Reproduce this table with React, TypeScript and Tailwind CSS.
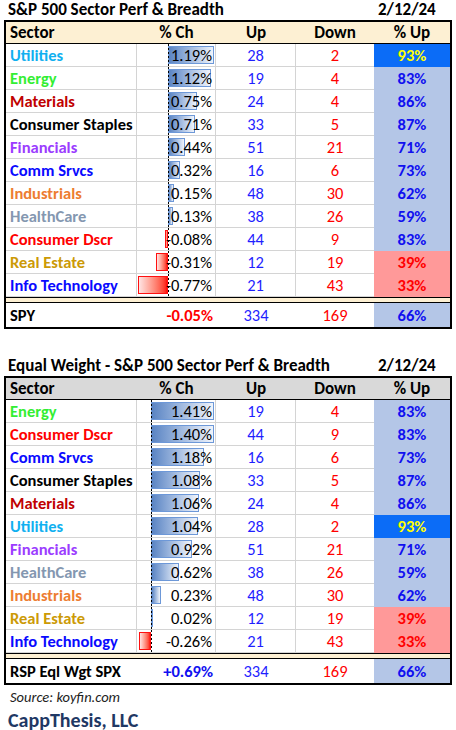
type Row = [string, string, number, number, number, number];

const SP500: Row[] = [
  ["Utilities", "#10b0f0", 1.19, 28, 2, 93],
  ["Energy", "#33ee33", 1.12, 19, 4, 83],
  ["Materials", "#c00000", 0.75, 24, 4, 86],
  ["Consumer Staples", "#000000", 0.71, 33, 5, 87],
  ["Financials", "#9b3cff", 0.44, 51, 21, 71],
  ["Comm Srvcs", "#0a0aff", 0.32, 16, 6, 73],
  ["Industrials", "#ed7d31", 0.15, 48, 30, 62],
  ["HealthCare", "#8497b0", 0.13, 38, 26, 59],
  ["Consumer Dscr", "#ff0000", -0.08, 44, 9, 83],
  ["Real Estate", "#cc9a06", -0.31, 12, 19, 39],
  ["Info Technology", "#0a0aff", -0.77, 21, 43, 33],
];

const EQUAL: Row[] = [
  ["Energy", "#33ee33", 1.41, 19, 4, 83],
  ["Consumer Dscr", "#ff0000", 1.4, 44, 9, 83],
  ["Comm Srvcs", "#0a0aff", 1.18, 16, 6, 73],
  ["Consumer Staples", "#000000", 1.08, 33, 5, 87],
  ["Materials", "#c00000", 1.06, 24, 4, 86],
  ["Utilities", "#10b0f0", 1.04, 28, 2, 93],
  ["Financials", "#9b3cff", 0.92, 51, 21, 71],
  ["HealthCare", "#8497b0", 0.62, 38, 26, 59],
  ["Industrials", "#ed7d31", 0.23, 48, 30, 62],
  ["Real Estate", "#cc9a06", 0.02, 12, 19, 39],
  ["Info Technology", "#0a0aff", -0.26, 21, 43, 33],
];

function PctUp({ v }: { v: number }) {
  // best sector gets the bright fill, weak breadth gets pink
  if (v >= 90)
    return <div className="h-full flex items-center justify-center bg-[#0b6cf7] text-[#ffff00] font-bold">{v}%</div>;
  if (v < 50)
    return <div className="h-full flex items-center justify-center bg-[#ff9999] text-[#ff0000] font-bold">{v}%</div>;
  return <div className="h-full flex items-center justify-center bg-[#b4c6e7] text-[#1010f0] font-bold">{v}%</div>;
}

function BarCell({ v, axis, scale }: { v: number; axis: number; scale: number }) {
  const w = Math.abs(v) * scale;
  return (
    <div className="relative h-full border-r border-b border-[#d4d4d4] flex items-center justify-end pr-[3px]">
      {v >= 0 ? (
        <div
          className="absolute top-[2px] h-[18px] border border-[#6d98d8] bg-gradient-to-r from-[#5a84c3] to-[#f0f4fb]"
          style={{ left: axis, width: w }}
        />
      ) : (
        <div
          className="absolute top-[2px] h-[18px] border border-[#ff1010] bg-gradient-to-r from-[#ffe4e4] to-[#ff0000]"
          style={{ left: axis - w, width: w }}
        />
      )}
      <div
        className="absolute top-0 bottom-0 w-px bg-[repeating-linear-gradient(to_bottom,#000_0_2px,transparent_2px_4px)]"
        style={{ left: axis }}
      />
      <span className="relative">{v.toFixed(2)}%</span>
    </div>
  );
}

function SectorTable({
  title,
  rows,
  headBg,
  axis,
  scale,
  footLabel,
  footValue,
  footColor,
}: {
  title: string;
  rows: Row[];
  headBg: string;
  axis: number;
  scale: number;
  footLabel: string;
  footValue: string;
  footColor: string;
}) {
  const cols = "grid grid-cols-[131px_79px_80px_78px_76px]";
  return (
    <div className="px-[4px]">
      <div className="h-[20px] flex items-end pb-[2px] text-[17px] font-bold leading-none">
        <span className="pl-[4px] w-[374px]">{title}</span>
        <span>2/12/24</span>
      </div>
      <div className="border-2 border-black w-[448px]">
        <div className={`${cols} h-[22px] items-center text-[17px] font-bold border-b border-black ${headBg}`}>
          <span className="pl-[4px]">Sector</span>
          <span className="text-center">% Ch</span>
          <span className="text-center">Up</span>
          <span className="text-center">Down</span>
          <span className="text-center">% Up</span>
        </div>
        {rows.map(([name, color, ch, up, down, pct]) => (
          <div key={name} className={`${cols} h-[23px]`}>
            <div className="h-full flex items-center pl-[4px] font-bold border-r border-b border-[#d4d4d4]" style={{ color }}>
              {name}
            </div>
            <BarCell v={ch} axis={axis} scale={scale} />
            <div className="h-full flex items-center justify-center text-[#1f1fff] border-r border-b border-[#d4d4d4]">{up}</div>
            <div className="h-full flex items-center justify-center text-[#ff0000] border-b border-[#d4d4d4]">{down}</div>
            <PctUp v={pct} />
          </div>
        ))}
        <div className="h-[6px] border-y border-black bg-[#fdf0d3]" />
        <div className={`${cols} h-[24px] items-stretch`}>
          <div className="flex items-center pl-[4px] font-bold">{footLabel}</div>
          <div className={`flex items-center justify-end pr-[3px] font-bold ${footColor}`}>{footValue}</div>
          <div className="flex items-center justify-center text-[#1f1fff]">334</div>
          <div className="flex items-center justify-center text-[#ff0000]">169</div>
          <div className="flex items-center justify-center bg-[#b4c6e7] text-[#1010f0] font-bold">66%</div>
        </div>
      </div>
    </div>
  );
}

export default function App() {
  return (
    <div className="w-[456px] h-[730px] bg-white text-black text-[16.5px] leading-none font-[family-name:Carlito,Lato,sans-serif]">
      <SectorTable
        title="S&P 500 Sector Perf & Breadth"
        rows={SP500}
        headBg="bg-[#fdf0d3]"
        axis={31}
        scale={38.6}
        footLabel="SPY"
        footValue="-0.05%"
        footColor="text-[#ff0000]"
      />
      <div className="h-[27px]" />
      <SectorTable
        title="Equal Weight - S&P 500 Sector Perf & Breadth"
        rows={EQUAL}
        headBg="bg-[#d9d9d9]"
        axis={14}
        scale={45}
        footLabel="RSP Eql Wgt SPX"
        footValue="+0.69%"
        footColor="text-[#1010f0]"
      />
      <div className="pl-[10px] pt-[5px] text-[14.5px] italic text-[#222]">Source: koyfin.com</div>
      <div className="pl-[8px] pt-[5px] text-[20px] font-bold text-[#1f3864]">CappThesis, LLC</div>
    </div>
  );
}
